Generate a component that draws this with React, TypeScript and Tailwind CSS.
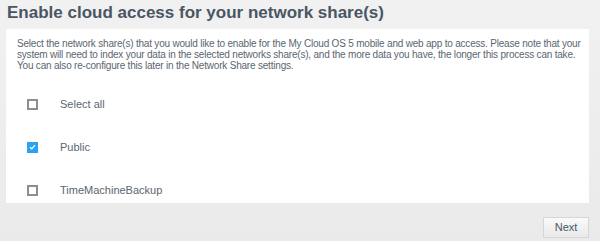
import React from 'react';

const shares = [
    { name: 'Select all', checked: false },
    { name: 'Public', checked: true },
    { name: 'TimeMachineBackup', checked: false },
];

const lines = [
    'Select the network share(s) that you would like to enable for the My Cloud OS 5 mobile and web app to access. Please note that your',
    'system will need to index your data in the selected networks share(s), and the more data you have, the longer this process can take.',
    'You can also re-configure this later in the Network Share settings.',
];

const Box: React.FC<{ checked: boolean }> = ({ checked }) =>
    checked ? (
        <span className="flex h-[11px] w-[11px] items-center justify-center bg-[#2ba3f0]">
            <svg width="7" height="6" viewBox="0 0 7 6">
                <path d="M1 3.2 L2.8 4.8 L6 1.2" stroke="#fff" strokeWidth="1.2" fill="none" />
            </svg>
        </span>
    ) : (
        <span className="block h-[11px] w-[11px] border-2 border-[#8a8f94] bg-white" />
    );

const App: React.FC = () => {
    return (
        <div
            className="flex h-[241px] w-[600px] flex-col bg-gradient-to-b from-[#f1f1f1] to-[#eaeaea] px-[6px]"
            style={{ fontFamily: '"Liberation Sans", Arial, sans-serif' }}
        >
            <h1 className="pl-[1px] pt-[1px] text-[17px] font-bold leading-[24px] text-[#4a5664]">
                Enable cloud access for your network share(s)
            </h1>
            <div className="mt-[4px] mr-[5px] h-[174px] bg-white pl-[11px] pr-[8px] pt-[9px]">
                <div className="text-[10px] leading-[11px] tracking-[-0.2px] text-[#5b6670]">
                    {lines.map((l) => (
                        <p key={l} className="whitespace-nowrap">{l}</p>
                    ))}
                </div>
                <div className="mt-[27px] flex flex-col gap-[31px] pl-[10px]">
                    {shares.map((s) => (
                        <label key={s.name} className="flex h-[12px] items-center">
                            <Box checked={s.checked} />
                            <span className="ml-[22px] text-[11px] text-[#5b6670]">{s.name}</span>
                        </label>
                    ))}
                </div>
            </div>
            <div className="mt-[14px] mr-[5px] flex justify-end">
                <button className="h-[21px] w-[46px] border border-[#d6d6d6] bg-gradient-to-b from-[#fafafa] to-[#e9e9e9] text-[11px] text-[#4a5664]">
                    Next
                </button>
            </div>
        </div>
    );
};

export default App;
